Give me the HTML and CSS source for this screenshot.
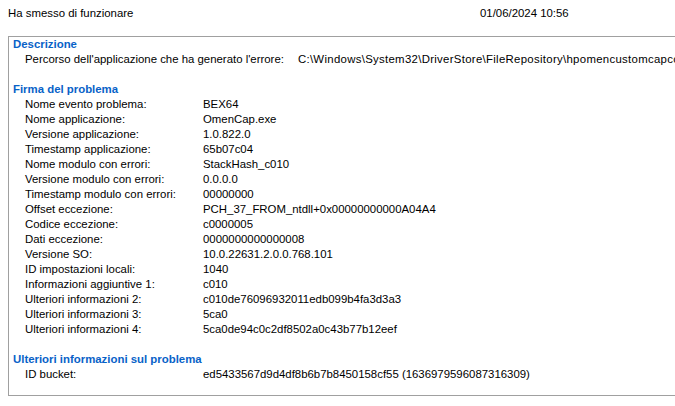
FILE: index.html
```html
<!DOCTYPE html>
<html lang="it">
<head>
<meta charset="utf-8">
<link rel="stylesheet" href="styles.css">
</head>
<body>
<div class="top">
  <div class="title">Ha smesso di funzionare</div>
  <div class="date">01/06/2024 10:56</div>
</div>
<div class="box">
  <div class="section">
    <div class="head">Descrizione</div>
    <div class="path"><span>Percorso dell'applicazione che ha generato l'errore:</span><span class="pathval">C:\Windows\System32\DriverStore\FileRepository\hpomencustomcapcomp.inf_amd64</span></div>
  </div>
  <div class="section">
    <div class="head">Firma del problema</div>
    <div class="row"><span class="k">Nome evento problema:</span><span>BEX64</span></div>
    <div class="row"><span class="k">Nome applicazione:</span><span>OmenCap.exe</span></div>
    <div class="row"><span class="k">Versione applicazione:</span><span>1.0.822.0</span></div>
    <div class="row"><span class="k">Timestamp applicazione:</span><span>65b07c04</span></div>
    <div class="row"><span class="k">Nome modulo con errori:</span><span>StackHash_c010</span></div>
    <div class="row"><span class="k">Versione modulo con errori:</span><span>0.0.0.0</span></div>
    <div class="row"><span class="k">Timestamp modulo con errori:</span><span>00000000</span></div>
    <div class="row"><span class="k">Offset eccezione:</span><span>PCH_37_FROM_ntdll+0x00000000000A04A4</span></div>
    <div class="row"><span class="k">Codice eccezione:</span><span>c0000005</span></div>
    <div class="row"><span class="k">Dati eccezione:</span><span>0000000000000008</span></div>
    <div class="row"><span class="k">Versione SO:</span><span>10.0.22631.2.0.0.768.101</span></div>
    <div class="row"><span class="k">ID impostazioni locali:</span><span>1040</span></div>
    <div class="row"><span class="k">Informazioni aggiuntive 1:</span><span>c010</span></div>
    <div class="row"><span class="k">Ulteriori informazioni 2:</span><span>c010de76096932011edb099b4fa3d3a3</span></div>
    <div class="row"><span class="k">Ulteriori informazioni 3:</span><span>5ca0</span></div>
    <div class="row"><span class="k">Ulteriori informazioni 4:</span><span>5ca0de94c0c2df8502a0c43b77b12eef</span></div>
  </div>
  <div class="section">
    <div class="head">Ulteriori informazioni sul problema</div>
    <div class="row"><span class="k">ID bucket:</span><span>ed5433567d9d4df8b6b7b8450158cf55 (1636979596087316309)</span></div>
  </div>
</div>
</body>
</html>
```
FILE: styles.css
```css
html, body {
  margin: 0;
  padding: 0;
  background: #ffffff;
  overflow: hidden;
}
body {
  font-family: "Liberation Sans", Arial, sans-serif;
  font-size: 11.4px;
  line-height: 15px;
  color: #000000;
  width: 675px;
  height: 406px;
}
.top {
  display: flex;
  padding: 6px 0 0 8px;
  height: 36px;
  box-sizing: border-box;
}
.title {
  width: 472px;
}
.box {
  margin-left: 8px;
  width: 667px;
  border: 1px solid #a0a0a0;
  border-right: none;
  padding: 0 0 13px 4px;
  height: 360px;
  box-sizing: border-box;
  white-space: nowrap;
  overflow: hidden;
}
.section + .section {
  margin-top: 15px;
}
.head {
  color: #0862c8;
  font-weight: 700;
}
.path, .row {
  display: flex;
  padding-left: 12px;
}
.path {
  gap: 14px;
}
.pathval {
  letter-spacing: 0.3px;
}
.k {
  width: 178px;
  flex: none;
}
```
